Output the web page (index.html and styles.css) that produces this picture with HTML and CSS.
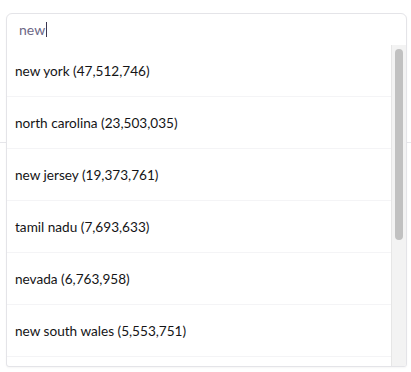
FILE: index.html
```html
<!DOCTYPE html>
<html lang="en">
<head>
<meta charset="utf-8">
<title>Autocomplete</title>
<link rel="stylesheet" href="styles.css">
</head>
<body>
<div class="page">
  <div class="backdrop"></div>
  <div class="combo">
    <div class="field"><span class="value">new</span><span class="caret"></span></div>
    <div class="list-wrap">
      <ul class="list">
        <li class="option">new york (47,512,746)</li>
        <li class="option">north carolina (23,503,035)</li>
        <li class="option">new jersey (19,373,761)</li>
        <li class="option">tamil nadu (7,693,633)</li>
        <li class="option">nevada (6,763,958)</li>
        <li class="option">new south wales (5,553,751)</li>
        <li class="option option-empty"></li>
      </ul>
      <div class="scrollbar"><div class="thumb"></div></div>
    </div>
  </div>
</div>
</body>
</html>
```

FILE: styles.css
```css
html, body {
  margin: 0;
  padding: 0;
  background: #ffffff;
}
body {
  font-family: Lato, "Noto Sans", sans-serif;
  font-size: 13.6px;
  color: #141416;
}
.page {
  position: relative;
  width: 411px;
  height: 372px;
  overflow: hidden;
}
.backdrop {
  height: 142px;
  border-bottom: 1px solid #e6e6ea;
}
.combo {
  position: absolute;
  top: 13px;
  left: 6px;
  width: 401px;
  box-sizing: border-box;
  background: #ffffff;
  border: 1px solid #e4e4e8;
  border-radius: 6px 6px 3px 3px;
  box-shadow: 0 1px 2px rgba(0, 0, 0, 0.04);
  overflow: hidden;
}
.field {
  height: 31px;
  display: flex;
  align-items: center;
  padding-left: 12px;
  font-size: 14px;
  color: #6d6886;
}
.caret {
  display: inline-block;
  width: 1px;
  height: 15px;
  background: #3b3650;
  margin-left: 1px;
}
.list-wrap {
  display: flex;
  height: 321px;
}
.list {
  flex: 1;
  list-style: none;
  margin: 0;
  padding: 0;
  overflow: hidden;
}
.option {
  box-sizing: border-box;
  height: 52px;
  display: flex;
  align-items: center;
  padding-left: 8px;
  border-bottom: 1px solid #f4f4f6;
  white-space: nowrap;
}
.scrollbar {
  width: 15px;
  box-sizing: border-box;
  background: #f3f3f3;
  border-left: 1px solid #e6e6e6;
  padding: 4px 3px 0 3px;
}
.thumb {
  height: 191px;
  background: #c1c1c1;
  border-radius: 4px;
}
```
